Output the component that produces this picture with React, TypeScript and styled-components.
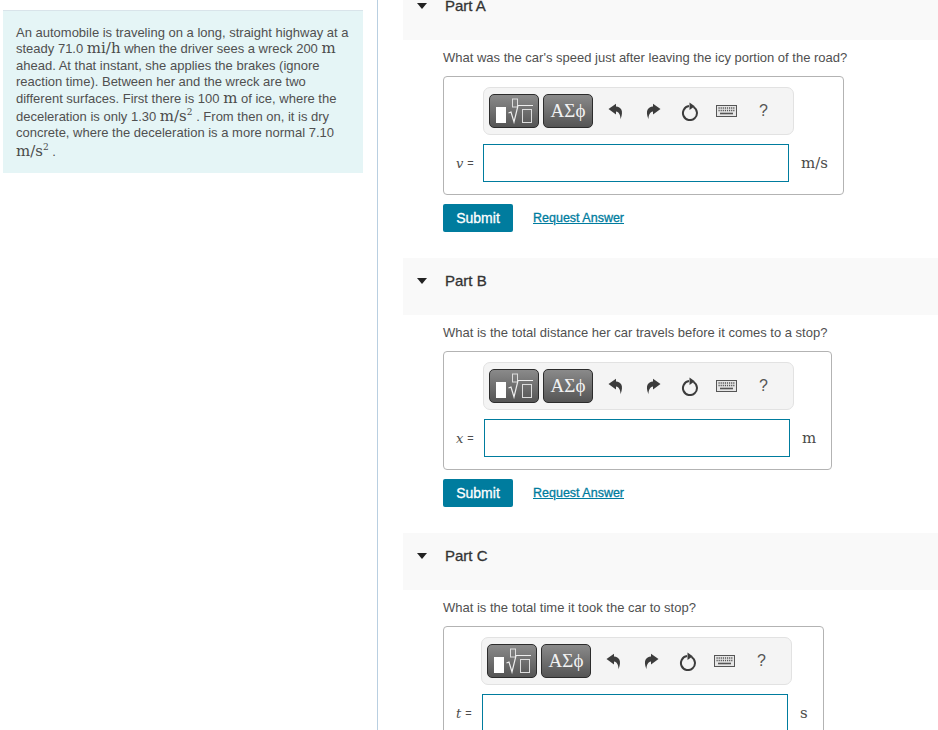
import styled, { createGlobalStyle } from "styled-components";

const GlobalStyle = createGlobalStyle`
  html, body {
    margin: 0;
    padding: 0;
    background: #fff;
  }
  body {
    font-family: "Liberation Sans", Arial, sans-serif;
    color: #4d4d4d;
    overflow: hidden;
  }
`;

const teal = "#007c9e";

const ReplyIcon = ({ flip }: { flip?: boolean }) => (
  <svg width="16" height="17" viewBox="0 0 16 17" style={flip ? { transform: "scaleX(-1)" } : undefined}>
    <path d="M0.5 6 L8 0.8 V3.6 C13 3.8 16 8 12.5 16.2 C12.5 12 11 9.2 8 8.6 V11.4 Z" fill="#3c3c3c" />
  </svg>
);

const RefreshIcon = () => (
  <svg width="18" height="19" viewBox="0 0 18 19">
    <path d="M12.5 5 A7 7 0 1 1 8 4.1" fill="none" stroke="#3c3c3c" strokeWidth="2" />
    <path d="M8.5 0.5 L13.8 4.2 L8.5 8 Z" fill="#3c3c3c" />
  </svg>
);

const KeyboardIcon = () => (
  <svg width="21" height="12" viewBox="0 0 21 12">
    <rect x="0.5" y="0.5" width="20" height="11" fill="#e6e6e6" stroke="#555" />
    <path d="M2.5 3 H18.5 M2.5 5.5 H18.5" stroke="#555" strokeWidth="1.4" strokeDasharray="1.2 0.9" />
    <path d="M4 8.5 H17" stroke="#555" strokeWidth="1.6" />
  </svg>
);

const TemplateIcon = () => (
  <svg width="38" height="28" viewBox="0 0 38 28">
    <rect x="1" y="10" width="10" height="16" fill="#fff" />
    <rect x="17.5" y="2" width="5" height="8" fill="none" stroke="#ddd" />
    <path d="M13.5 16 L16 15 L19 25 L23 8.5 H38" fill="none" stroke="#eee" strokeWidth="1.2" />
    <rect x="27.5" y="12.5" width="9" height="13" fill="none" stroke="#ddd" />
  </svg>
);

const Page = styled.div`
  display: flex;
  width: 938px;
  height: 730px;
  overflow: hidden;
`;

const LeftPane = styled.aside`
  box-sizing: border-box;
  flex: 0 0 378px;
  height: 730px;
  padding: 10px 0 0 3px;
  border-right: 1px solid #b9cfe1;
`;

const ProblemBox = styled.div`
  box-sizing: border-box;
  width: 360px;
  height: 163px;
  padding: 14px 13px 0;
  background: #e5f5f6;
  border-top: 1px solid #d9e4ea;
  font-size: 13px;
  line-height: 16.4px;
  color: #505050;
`;

const Math = styled.span`
  font-family: "DejaVu Serif", "Liberation Serif", serif;
  font-size: 15px;
  line-height: 12px;
  color: #4a4a4a;

  sup {
    font-size: 9px;
    line-height: 11px;
  }
`;

const RightPane = styled.main`
  flex: 1;
  min-width: 0;
  margin-top: -17px;
  padding-left: 25px;
`;

const PartSection = styled.section`
  height: 275px;
`;

const PartHeader = styled.div`
  display: flex;
  align-items: flex-start;
  box-sizing: border-box;
  height: 57px;
  padding: 15px 0 0 14px;
  background: #f9f9f9;
`;

const Caret = styled.span`
  width: 0;
  height: 0;
  margin: 5px 18px 0 0;
  border-left: 5px solid transparent;
  border-right: 5px solid transparent;
  border-top: 6px solid #222;
`;

const PartTitle = styled.h3`
  margin: 0;
  font-size: 15px;
  line-height: 16px;
  font-weight: 400;
  color: #333;
  -webkit-text-stroke: 0.3px #333;
`;

const PartBody = styled.div`
  padding-left: 40px;
`;

const Prompt = styled.p`
  height: 36px;
  margin: 0;
  padding-top: 9px;
  box-sizing: border-box;
  font-size: 13px;
  line-height: 17px;
  color: #505050;
`;

const AnswerBox = styled.div<{ $labelWidth: number }>`
  box-sizing: border-box;
  display: inline-grid;
  grid-template-columns: ${(p) => p.$labelWidth}px 306px auto;
  column-gap: 0;
  row-gap: 9px;
  height: 119px;
  padding: 10px 15px 12px 12px;
  border: 1px solid #b3b3b3;
  border-radius: 4px;
  vertical-align: top;
`;

const Toolbar = styled.div<{ $shift: number }>`
  grid-column: 2 / 4;
  box-sizing: border-box;
  display: flex;
  align-items: center;
  width: 311px;
  height: 48px;
  margin-left: ${(p) => p.$shift}px;
  padding: 0 0 0 5px;
  background: #f4f4f4;
  border: 1px solid #e2e2e2;
  border-radius: 7px;
`;

const ToolButton = styled.div`
  box-sizing: border-box;
  display: flex;
  align-items: center;
  justify-content: center;
  width: 50px;
  height: 34px;
  margin-right: 4px;
  background: linear-gradient(#8a8a8a, #555);
  border: 1px solid #2c2c2c;
  border-radius: 5px;
  color: #f2f2f2;
  font-family: "Liberation Serif", serif;
  font-size: 19px;
`;

const IconSlot = styled.div`
  display: flex;
  align-items: center;
  justify-content: center;
  flex: 0 0 37px;
  height: 34px;
  color: #555;
  font-size: 16px;
`;

const IconGroup = styled.div`
  display: flex;
`;

const VarLabel = styled.div`
  display: flex;
  align-items: center;
  height: 38px;
  font-size: 11px;
  white-space: nowrap;

  i {
    font-family: "DejaVu Serif", serif;
    font-size: 13px;
    margin-right: 4px;
  }
`;

const AnswerInput = styled.div`
  box-sizing: border-box;
  width: 306px;
  height: 38px;
  background: #fff;
  border: 1px solid ${teal};
`;

const Unit = styled(Math)`
  display: flex;
  align-items: center;
  height: 38px;
  padding-left: 12px;
`;

const Actions = styled.div`
  display: flex;
  align-items: center;
  gap: 20px;
  margin-top: 9px;
`;

const SubmitButton = styled.button`
  width: 70px;
  height: 28px;
  padding: 0;
  background: ${teal};
  border: 0;
  border-radius: 2px;
  color: #fff;
  font-family: inherit;
  font-size: 14px;
  -webkit-text-stroke: 0.3px #fff;
`;

const RequestLink = styled.a`
  margin-top: -1px;
  font-size: 12.5px;
  color: ${teal};
  text-decoration: underline;
  -webkit-text-stroke: 0.3px ${teal};
`;

const parts = [
  {
    name: "Part A",
    prompt: "What was the car's speed just after leaving the icy portion of the road?",
    variable: "v",
    unit: "m/s",
    labelWidth: 27,
    shift: 0,
  },
  {
    name: "Part B",
    prompt: "What is the total distance her car travels before it comes to a stop?",
    variable: "x",
    unit: "m",
    labelWidth: 28,
    shift: -1,
  },
  {
    name: "Part C",
    prompt: "What is the total time it took the car to stop?",
    variable: "t",
    unit: "s",
    labelWidth: 26,
    shift: -1,
  },
];

const App = () => (
  <Page>
    <GlobalStyle />
    <LeftPane>
      <ProblemBox>
        An automobile is traveling on a long, straight highway at a steady 71.0 <Math>mi/h</Math> when the
        driver sees a wreck 200 <Math>m</Math> ahead. At that instant, she applies the brakes (ignore reaction
        time). Between her and the wreck are two different surfaces. First there is 100 <Math>m</Math> of ice,
        where the deceleration is only 1.30 <Math>m/s<sup>2</sup></Math> . From then on, it is dry concrete,
        where the deceleration is a more normal 7.10 <Math>m/s<sup>2</sup></Math> .
      </ProblemBox>
    </LeftPane>
    <RightPane>
      {parts.map((part) => (
        <PartSection key={part.name}>
          <PartHeader>
            <Caret />
            <PartTitle>{part.name}</PartTitle>
          </PartHeader>
          <PartBody>
            <Prompt>{part.prompt}</Prompt>
            <AnswerBox $labelWidth={part.labelWidth}>
              <Toolbar $shift={part.shift}>
                <ToolButton>
                  <TemplateIcon />
                </ToolButton>
                <ToolButton>ΑΣϕ</ToolButton>
                <IconGroup>
                  <IconSlot>
                    <ReplyIcon />
                  </IconSlot>
                  <IconSlot>
                    <ReplyIcon flip />
                  </IconSlot>
                  <IconSlot>
                    <RefreshIcon />
                  </IconSlot>
                  <IconSlot>
                    <KeyboardIcon />
                  </IconSlot>
                  <IconSlot>?</IconSlot>
                </IconGroup>
              </Toolbar>
              <VarLabel>
                <i>{part.variable}</i>=
              </VarLabel>
              <AnswerInput />
              <Unit>{part.unit}</Unit>
            </AnswerBox>
            <Actions>
              <SubmitButton>Submit</SubmitButton>
              <RequestLink href="#">Request Answer</RequestLink>
            </Actions>
          </PartBody>
        </PartSection>
      ))}
    </RightPane>
  </Page>
);

export default App;
